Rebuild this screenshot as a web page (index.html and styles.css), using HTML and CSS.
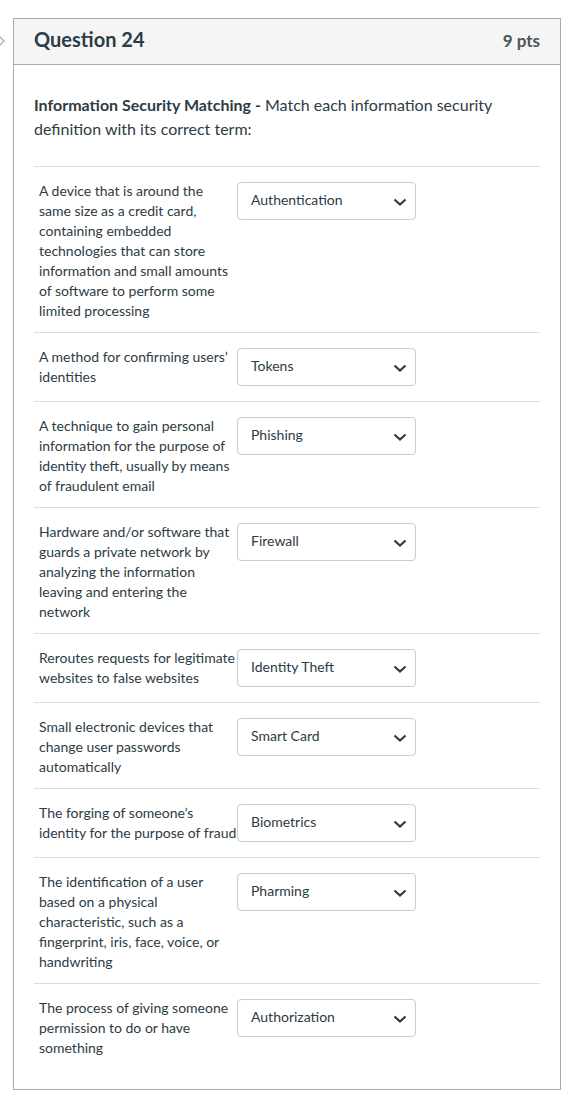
FILE: index.html
```html
<!DOCTYPE html>
<html lang="en">
<head>
<meta charset="utf-8">
<title>Question 24</title>
<link rel="stylesheet" href="styles.css">
</head>
<body>
<svg class="side-arrow" width="8" height="14" viewBox="0 0 8 14"><path d="M-2 1 L4 7 L-2 13" fill="none" stroke="#a9b8c4" stroke-width="1.4"/></svg>
<div class="card">
  <div class="card-header">
    <span class="q-title">Question 24</span>
    <span class="q-pts">9 pts</span>
  </div>
  <div class="card-body">
    <p class="intro"><strong>Information Security Matching -</strong> Match each information security definition with its correct term:</p>
    <div class="rows">
      <div class="row"><div class="label">A device that is around the same size as a credit card, containing embedded technologies that can store information and small amounts of software to perform some limited processing</div><div class="select"><span>Authentication</span><svg class="chev" width="14" height="8" viewBox="0 0 14 8"><path d="M1.5 1.5 L7 6.5 L12.5 1.5" fill="none" stroke="#2d3b45" stroke-width="2.2"/></svg></div></div>
      <div class="row"><div class="label">A method for confirming users’ identities</div><div class="select"><span>Tokens</span><svg class="chev" width="14" height="8" viewBox="0 0 14 8"><path d="M1.5 1.5 L7 6.5 L12.5 1.5" fill="none" stroke="#2d3b45" stroke-width="2.2"/></svg></div></div>
      <div class="row"><div class="label">A technique to gain personal information for the purpose of identity theft, usually by means of fraudulent email</div><div class="select"><span>Phishing</span><svg class="chev" width="14" height="8" viewBox="0 0 14 8"><path d="M1.5 1.5 L7 6.5 L12.5 1.5" fill="none" stroke="#2d3b45" stroke-width="2.2"/></svg></div></div>
      <div class="row"><div class="label">Hardware and/or software that guards a private network by analyzing the information leaving and entering the network</div><div class="select"><span>Firewall</span><svg class="chev" width="14" height="8" viewBox="0 0 14 8"><path d="M1.5 1.5 L7 6.5 L12.5 1.5" fill="none" stroke="#2d3b45" stroke-width="2.2"/></svg></div></div>
      <div class="row"><div class="label">Reroutes requests for legitimate websites to false websites</div><div class="select"><span>Identity Theft</span><svg class="chev" width="14" height="8" viewBox="0 0 14 8"><path d="M1.5 1.5 L7 6.5 L12.5 1.5" fill="none" stroke="#2d3b45" stroke-width="2.2"/></svg></div></div>
      <div class="row"><div class="label">Small electronic devices that change user passwords automatically</div><div class="select"><span>Smart Card</span><svg class="chev" width="14" height="8" viewBox="0 0 14 8"><path d="M1.5 1.5 L7 6.5 L12.5 1.5" fill="none" stroke="#2d3b45" stroke-width="2.2"/></svg></div></div>
      <div class="row"><div class="label">The forging of someone’s identity for the purpose of fraud</div><div class="select"><span>Biometrics</span><svg class="chev" width="14" height="8" viewBox="0 0 14 8"><path d="M1.5 1.5 L7 6.5 L12.5 1.5" fill="none" stroke="#2d3b45" stroke-width="2.2"/></svg></div></div>
      <div class="row"><div class="label">The identification of a user based on a physical characteristic, such as a fingerprint, iris, face, voice, or handwriting</div><div class="select"><span>Pharming</span><svg class="chev" width="14" height="8" viewBox="0 0 14 8"><path d="M1.5 1.5 L7 6.5 L12.5 1.5" fill="none" stroke="#2d3b45" stroke-width="2.2"/></svg></div></div>
      <div class="row"><div class="label">The process of giving someone permission to do or have something</div><div class="select"><span>Authorization</span><svg class="chev" width="14" height="8" viewBox="0 0 14 8"><path d="M1.5 1.5 L7 6.5 L12.5 1.5" fill="none" stroke="#2d3b45" stroke-width="2.2"/></svg></div></div>
    </div>
  </div>
</div>
</body>
</html>
```
FILE: styles.css
```css
* { box-sizing: border-box; }
html, body { margin: 0; padding: 0; background: #fff; }
body {
  font-family: Lato, "Noto Sans", "Liberation Sans", sans-serif;
  color: #2d3b45;
  position: relative;
  padding-top: 18px;
  padding-left: 13px;
  width: 574px;
}
.side-arrow { position: absolute; left: 0; top: 34px; }
.card {
  width: 548px;
  border: 1px solid #aaaaaa;
  background: #fff;
}
.card-header {
  height: 46px;
  background: #f5f5f5;
  border-bottom: 1px solid #aaaaaa;
  display: flex;
  align-items: center;
  justify-content: space-between;
  padding: 0 20px 5px 20px;
}
.q-title { font-size: 20px; font-weight: 700; color: #2d3b45; }
.q-pts { font-size: 17px; font-weight: 700; color: #4a555e; margin-top: 2px; }
.card-body { padding: 28px 20px 20px 20px; }
.intro {
  margin: 0 0 25px 0;
  font-size: 16px;
  line-height: 24px;
}
.intro strong { font-weight: 700; }
.row {
  display: flex;
  align-items: flex-start;
  border-top: 1px solid #dcdcdc;
  padding: 14px 0 11px 5px;
}
.label {
  width: 198px;
  font-size: 14px;
  line-height: 20px;
}
.select {
  width: 179px;
  height: 38px;
  margin: 1px 0 4px 0;
  border: 1px solid #c7cdd1;
  border-radius: 4px;
  background: #fff;
  display: flex;
  align-items: center;
  justify-content: space-between;
  padding: 0 8px 3px 13px;
  font-size: 14px;
  color: #2d3b45;
}
.chev { display: block; margin-top: 5px; }
```
